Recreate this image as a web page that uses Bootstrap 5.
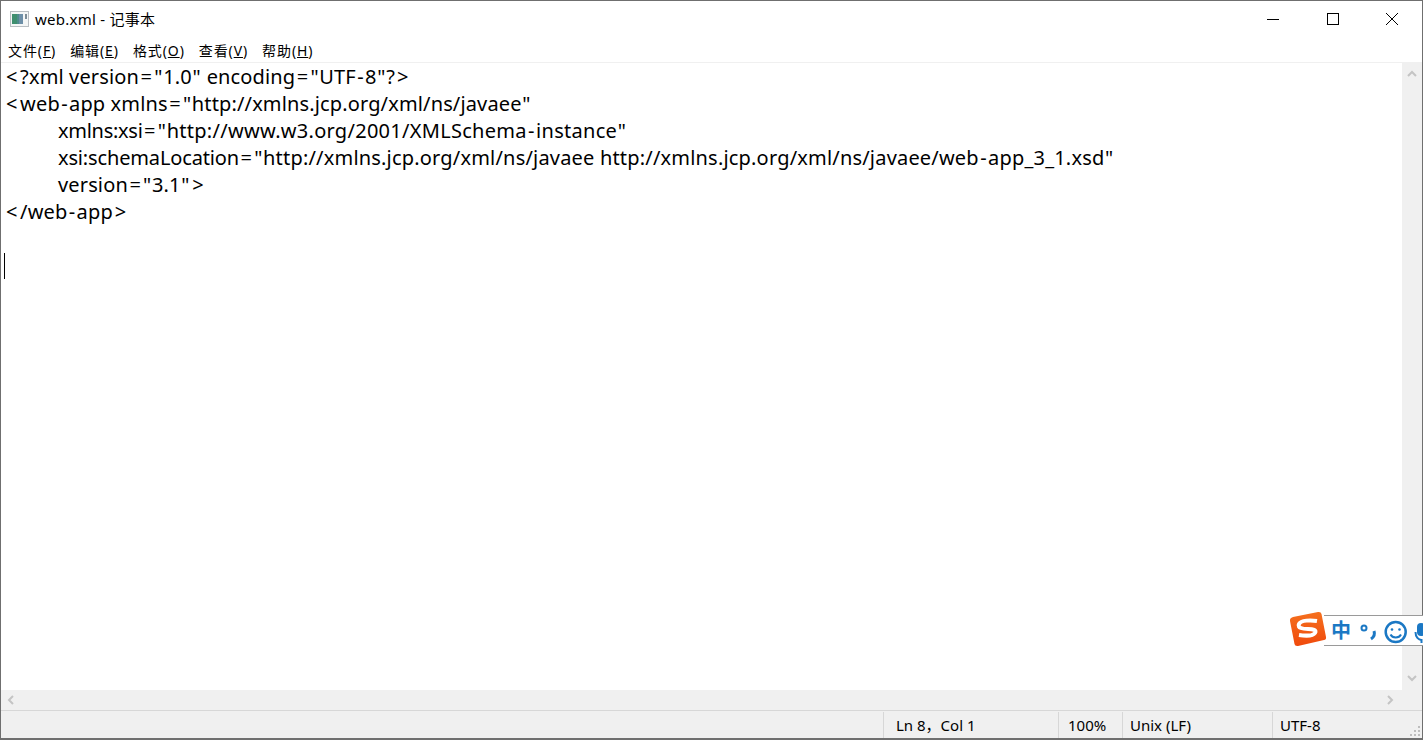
<!DOCTYPE html>
<html lang="zh">
<head>
<meta charset="utf-8">
<title>web.xml - 记事本</title>
<link href="https://cdn.jsdelivr.net/npm/bootstrap@5.3.0/dist/css/bootstrap.min.css" rel="stylesheet">
<style>
html,body{height:100%;margin:0;overflow:hidden;background:#fff}
body{font-family:"Noto Sans","Noto Sans CJK SC",sans-serif;color:#000}
.np-win{width:1423px;height:740px;border:1px solid #6f6f6f;border-bottom-width:2px;background:#fff;position:relative;overflow:hidden}
.np-title{height:38px;padding:0 0 2px 9px;font-size:15px;letter-spacing:.25px}
.np-appicon{width:19px;height:16px;margin-right:6px}
.np-winbtn{width:59.5px;height:36px}
.np-menu{height:23px;padding-left:7px;gap:14px;font-size:14px;letter-spacing:.9px;line-height:23px;border-bottom:1px solid #f0f0f0;box-sizing:content-box}
.np-body{min-height:0}
.np-edit{margin:0;padding:0 0 0 5px;font-family:"Noto Sans","Noto Sans CJK SC",sans-serif;font-size:20px;letter-spacing:.142px;line-height:27px;tab-size:52px;color:#000;overflow:hidden;white-space:pre;position:relative}
.np-op{margin:0 1.3px}
.np-gt{margin:0 0 0 2px}
.np-lt{margin-right:2.500px}
.np-eq{margin:0 1.500px}
.np-qt{margin:0 .6px}
.np-k3{letter-spacing:-.28px}
.np-k4{letter-spacing:-.15px}
.np-l3{letter-spacing:.28px}
.np-l4{letter-spacing:.19px}
.np-caret{position:absolute;left:3px;top:190px;width:1px;height:26px;background:#000}
.np-vbar{width:20px;background:#f0f0f0;padding:7px 0 8px}
.np-hbar{height:20px;background:#f0f0f0;padding:0 28px 0 6px}
.np-status{height:28px;background:#f0f0f0;border-top:1px solid #d7d7d7;font-size:15px;line-height:28px;color:#000}
.np-cell{border-left:1px solid #d7d7d7;height:26px;line-height:26px;margin-top:1px;white-space:nowrap}
.np-c1{width:175px;padding-left:12px}.np-c2{width:64px;padding-left:9px}.np-c3{width:150px;padding-left:7px}.np-c4{width:150px;padding-left:7px}
.np-grip{position:absolute;right:1px;bottom:1px}
.np-ime{position:absolute;left:1288px;top:611px;width:135px;height:36px}
.np-imebar{position:absolute;left:36px;top:4px;right:0;height:31px;background:#fff;border:1px solid #9a9a9a;border-right:0;border-left:0}
.np-imetxt{position:absolute;left:43px;top:6px;font-size:20px;line-height:28px;font-weight:700;color:#1b78c4;white-space:nowrap}
</style>
</head>
<body>
<div class="np-win d-flex flex-column">
  <div class="np-title d-flex align-items-center flex-shrink-0">
    <svg class="np-appicon" viewBox="0 0 19 16"><rect x=".5" y=".5" width="18" height="15" fill="#f4f6f6" stroke="#b9bec2"/><rect x="2" y="3" width="11" height="10" fill="#4d8c8a"/><rect x="2" y="3" width="5" height="10" fill="#3f8f6f"/><rect x="9" y="3" width="4" height="10" fill="#6d8fa8"/><rect x="15" y="3" width="2" height="5" fill="#7d8c96"/></svg>
    <span>web.xml - 记事本</span>
    <div class="ms-auto d-flex">
      <div class="np-winbtn d-flex align-items-center justify-content-center"><svg width="12" height="12" viewBox="0 0 12 12"><path d="M0 6.500h12" stroke="#000"/></svg></div>
      <div class="np-winbtn d-flex align-items-center justify-content-center"><svg width="12" height="12" viewBox="0 0 12 12"><rect x=".5" y=".5" width="11" height="11" fill="none" stroke="#000"/></svg></div>
      <div class="np-winbtn d-flex align-items-center justify-content-center"><svg width="12" height="12" viewBox="0 0 12 12"><path d="M0 0l12 12M12 0L0 12" stroke="#000"/></svg></div>
    </div>
  </div>
  <div class="np-menu d-flex flex-shrink-0">
    <span>文件(<u>F</u>)</span><span>编辑(<u>E</u>)</span><span>格式(<u>O</u>)</span><span>查看(<u>V</u>)</span><span>帮助(<u>H</u>)</span>
  </div>
  <div class="np-body d-flex flex-grow-1">
    <pre class="np-edit flex-grow-1"><span class="np-lt">&lt;</span>?xml version<span class="np-eq">=</span><span class="np-qt">"</span>1.0<span class="np-qt">"</span> encoding<span class="np-eq">=</span><span class="np-qt">"</span>UTF<span class="np-op">-</span>8<span class="np-qt">"</span>?<span class="np-gt">&gt;</span>
<span class="np-lt">&lt;</span>web<span class="np-op">-</span>app xmlns<span class="np-eq">=</span><span class="np-qt">"</span>http://xmlns.jcp.org/xml/ns/javaee<span class="np-qt">"</span>
	<span class="np-k3">xmlns:xsi</span><span class="np-eq">=</span><span class="np-qt">"</span><span class="np-l3">http://www.w3.org/2001/XMLSchema<span class="np-op">-</span>instance</span><span class="np-qt">"</span>
	<span class="np-k4">xsi:schemaLocation</span><span class="np-eq">=</span><span class="np-qt">"</span><span class="np-l4">http://xmlns.jcp.org/xml/ns/javaee http://xmlns.jcp.org/xml/ns/javaee/web<span class="np-op">-</span>app_3_1.xsd</span><span class="np-qt">"</span>
	version<span class="np-eq">=</span><span class="np-qt">"</span>3.1<span class="np-qt">"</span><span class="np-gt">&gt;</span>
<span class="np-lt">&lt;</span>/web<span class="np-op">-</span>app<span class="np-gt">&gt;</span><i class="np-caret"></i></pre>
    <div class="np-vbar d-flex flex-column justify-content-between align-items-center flex-shrink-0">
      <svg width="10" height="7" viewBox="0 0 10 7"><path d="M1 6l4-4 4 4" fill="none" stroke="#c4c4c4" stroke-width="2"/></svg>
      <svg width="10" height="7" viewBox="0 0 10 7"><path d="M1 1l4 4 4-4" fill="none" stroke="#c4c4c4" stroke-width="2"/></svg>
    </div>
  </div>
  <div class="np-hbar d-flex justify-content-between align-items-center flex-shrink-0">
    <svg width="7" height="10" viewBox="0 0 7 10"><path d="M6 1L2 5l4 4" fill="none" stroke="#c4c4c4" stroke-width="2"/></svg>
    <svg width="7" height="10" viewBox="0 0 7 10"><path d="M1 1l4 4-4 4" fill="none" stroke="#c4c4c4" stroke-width="2"/></svg>
  </div>
  <div class="np-status d-flex justify-content-end flex-shrink-0">
    <div class="np-cell np-c1">Ln 8，Col 1</div>
    <div class="np-cell np-c2">100%</div>
    <div class="np-cell np-c3">Unix (LF)</div>
    <div class="np-cell np-c4">UTF-8</div>
  </div>
  <svg class="np-grip" width="12" height="12" viewBox="0 0 12 12" fill="#bdbdbd"><rect x="9" y="1" width="2" height="2"/><rect x="5" y="5" width="2" height="2"/><rect x="9" y="5" width="2" height="2"/><rect x="1" y="9" width="2" height="2"/><rect x="5" y="9" width="2" height="2"/><rect x="9" y="9" width="2" height="2"/></svg>
</div>
<div class="np-ime">
  <div class="np-imebar"></div>
  <svg class="position-absolute top-0 start-0" width="40" height="37" viewBox="0 0 40 37"><defs><linearGradient id="np-g" x1="0" y1="0" x2="0" y2="1"><stop offset="0" stop-color="#f5701e"/><stop offset="1" stop-color="#f04a0c"/></linearGradient></defs><path d="M5 6L30 1q3-.5 3.500 2L38 26q.5 2.500-2 3L10 35q-3 .5-3.500-2L2 10Q1.500 7 5 6z" fill="url(#np-g)"/><path d="M29 10c-6-1-16-1-18 3s4 5 9 5 9 1 7 4-10 3-16 2" fill="none" stroke="#fff" stroke-width="4"/></svg>
  <span class="np-imetxt">中</span>
  <svg class="position-absolute top-0 start-0" width="135" height="36" viewBox="0 0 135 36" fill="none" stroke="#1b78c4" stroke-width="2"><circle cx="76" cy="17" r="2.500"/><path d="M86 20c1 3 0 6-3 8" stroke-width="3"/><circle cx="107.700" cy="21" r="10" stroke-width="2.500"/><circle cx="104" cy="18.500" r="1.300" fill="#1b78c4" stroke="none"/><circle cx="111.500" cy="18.500" r="1.300" fill="#1b78c4" stroke="none"/><path d="M102.500 23.500c2 4 8.500 4 10.500 0"/><rect x="129" y="12" width="8" height="13" rx="4" fill="#1b78c4" stroke="none"/><path d="M127.500 21c0 5 3 8 6 8v3"/></svg>
</div>
</body>
</html>
